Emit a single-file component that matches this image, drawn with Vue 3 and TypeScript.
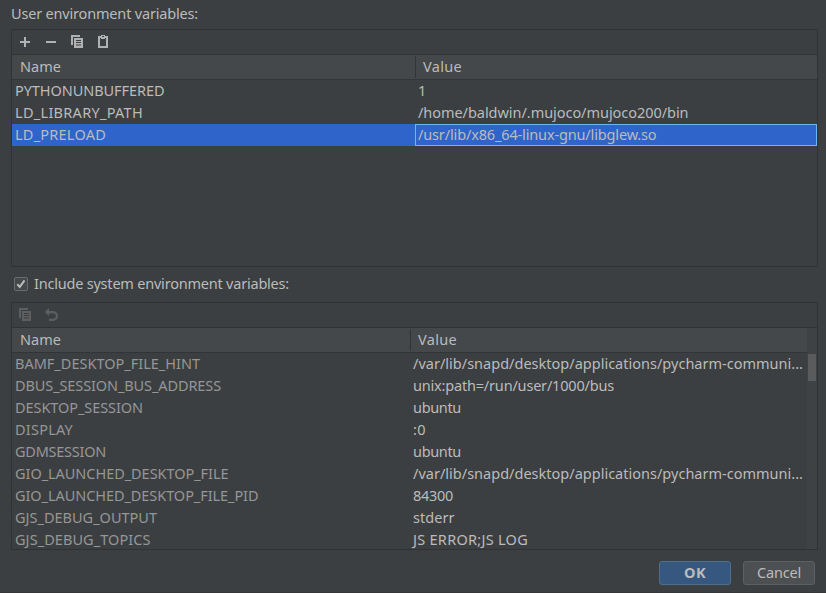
<script setup lang="ts">
import type { Directive } from 'vue'

interface Cell { text: string; width: number }
interface Variable { name: Cell; value: Cell }

const v = (name: string, nameWidth: number, value: string, valueWidth: number): Variable => ({
  name: { text: name, width: nameWidth },
  value: { text: value, width: valueWidth },
})

const userVariables: Variable[] = [
  v('PYTHONUNBUFFERED', 149.5, '1', 8),
  v('LD_LIBRARY_PATH', 128, '/home/baldwin/.mujoco/mujoco200/bin', 270.5),
  v('LD_PRELOAD', 91, '/usr/lib/x86_64-linux-gnu/libglew.so', 238.5),
]
const selected = 2

const desktopFile = '/var/lib/snapd/desktop/applications/pycharm-communi...'
const systemVariables: Variable[] = [
  v('BAMF_DESKTOP_FILE_HINT', 185, desktopFile, 390),
  v('DBUS_SESSION_BUS_ADDRESS', 206, 'unix:path=/run/user/1000/bus', 201),
  v('DESKTOP_SESSION', 128, 'ubuntu', 48),
  v('DISPLAY', 58, ':0', 13),
  v('GDMSESSION', 91, 'ubuntu', 48),
  v('GIO_LAUNCHED_DESKTOP_FILE', 213.5, desktopFile, 390),
  v('GIO_LAUNCHED_DESKTOP_FILE_PID', 243.5, '84300', 40),
  v('GJS_DEBUG_OUTPUT', 142, 'stderr', 41.5),
  v('GJS_DEBUG_TOPICS', 135.5, 'JS ERROR;JS LOG', 115),
]

// Tracks a label so that it spans the given number of pixels.
const vFit: Directive<HTMLElement, number> = {
  mounted(el, { value }) {
    const count = (el.textContent ?? '').length
    const natural = el.getBoundingClientRect().width
    if (count > 1) el.style.letterSpacing = `${(value - natural) / count}px`
  },
}
</script>

<template>
  <main class="dialog">
    <div class="caption"><span v-fit="187">User environment variables:</span></div>

    <section class="panel user">
      <div class="toolbar">
        <svg class="icon" viewBox="0 0 16 16"><path d="M7 3h2v4h4v2H9v4H7V9H3V7h4z" /></svg>
        <svg class="icon" viewBox="0 0 16 16"><path d="M3 7h10v2H3z" /></svg>
        <svg class="icon" viewBox="0 0 16 16">
          <path d="M2 1h9v2H4v8H2z" />
          <path fill-rule="evenodd" d="M5 4h9v10H5zM7 6v1h5V6zM7 8v1h5V8zM7 10.500v1h5v-1z" />
        </svg>
        <svg class="icon" viewBox="0 0 16 16">
          <path fill-rule="evenodd" d="M3 2h3V1h4v1h3v12H3zM5 4v8h6V4h-1v1H6V4zM7 2v1h2V2z" />
        </svg>
      </div>
      <div class="header">
        <div class="head name"><span v-fit="41">Name</span></div>
        <div class="head value"><span v-fit="39">Value</span></div>
      </div>
      <div class="rows">
        <div v-for="(item, i) in userVariables" :key="item.name.text" class="row" :class="{ selected: i === selected }">
          <div class="cell name"><span v-fit="item.name.width">{{ item.name.text }}</span></div>
          <div class="cell value"><span v-fit="item.value.width">{{ item.value.text }}</span></div>
        </div>
      </div>
    </section>

    <label class="include">
      <svg class="check" viewBox="0 0 14 14">
        <rect x=".5" y=".5" width="13" height="13" rx="1.500" />
        <path d="M3.300 7.200l2.500 2.700 4.700-6.600" />
      </svg>
      <span v-fit="255">Include system environment variables:</span>
    </label>

    <section class="panel system">
      <div class="toolbar disabled">
        <svg class="icon" viewBox="0 0 16 16">
          <path d="M2 1h9v2H4v8H2z" />
          <path fill-rule="evenodd" d="M5 4h9v10H5zM7 6v1h5V6zM7 8v1h5V8zM7 10.500v1h5v-1z" />
        </svg>
        <svg class="icon" viewBox="0 0 16 16">
          <path d="M2 5l4-4v3h4a5 5 0 0 1 0 10H6v-2.200h4a2.800 2.800 0 0 0 0-5.600H6V9z" />
        </svg>
      </div>
      <div class="body">
        <div class="table">
          <div class="header">
            <div class="head name"><span v-fit="41">Name</span></div>
            <div class="head value"><span v-fit="39">Value</span></div>
          </div>
          <div class="rows">
            <div v-for="item in systemVariables" :key="item.name.text" class="row">
              <div class="cell name"><span v-fit="item.name.width">{{ item.name.text }}</span></div>
              <div class="cell value"><span v-fit="item.value.width">{{ item.value.text }}</span></div>
            </div>
          </div>
        </div>
        <div class="scrollbar"><div class="thumb"></div></div>
      </div>
    </section>

    <footer class="actions">
      <button class="button primary"><span v-fit="22">OK</span></button>
      <button class="button"><span v-fit="44">Cancel</span></button>
    </footer>
  </main>
</template>

<style>
body { background: #3c3f41; }
</style>

<style scoped>
.dialog {
  box-sizing: border-box;
  width: 826px;
  height: 593px;
  padding: 0 8px 0 11px;
  overflow: hidden;
  border-bottom: 1px solid #343638;
  background: #3c3f41;
  color: #bbb;
  font: 14.5px/20px "Noto Sans", sans-serif;
  white-space: nowrap;
}
.dialog span { display: inline-block; }
.caption { height: 26px; padding-top: 3px; }
.panel {
  box-sizing: border-box;
  display: flex;
  flex-direction: column;
  border: 1px solid #323232;
  overflow: hidden;
}
.user { height: 238px; }
.system { height: 248px; }
.toolbar {
  display: flex;
  align-items: center;
  flex: none;
  gap: 10px;
  height: 24px;
  padding-left: 5px;
  border-bottom: 1px solid #323232;
}
.icon { width: 16px; height: 16px; fill: #afb1b3; }
.disabled .icon { fill: #5c5e60; }
.header {
  display: flex;
  align-items: center;
  height: 24px;
  background: #45484a;
  border-bottom: 1px solid #323537;
}
.name { flex: none; box-sizing: border-box; width: 403px; }
.value { flex: 1; box-sizing: border-box; }
.system .name { width: 398px; }
.head { height: 22px; padding-left: 8px; }
.head.value { padding-left: 7px; border-left: 1px solid #323537; }
.row { display: flex; height: 22px; }
.cell { height: 22px; padding-left: 3px; }
.system .cell.name { color: #969696; }
.selected { background: #2f65ca; }
.selected .value {
  padding-left: 2px;
  border: 1px solid #6eb5f5;
  line-height: 18px;
}
.include {
  display: flex;
  align-items: center;
  gap: 6px;
  height: 35px;
  padding-left: 3px;
}
.include span { padding-bottom: 4px; }
.check { width: 14px; height: 14px; margin-bottom: 1px; }
.check rect { fill: #43494a; stroke: #6b6b6b; }
.check path { fill: none; stroke: #bbb; stroke-width: 2; }
.body { display: flex; flex: 1; min-height: 0; }
.table { flex: 1; min-width: 0; overflow: hidden; }
.scrollbar {
  box-sizing: border-box;
  width: 10px;
  padding: 26px 1px 0;
  background: #3f4244;
}
.thumb { height: 27px; background: #595b5d; }
.actions { display: flex; gap: 12px; padding: 11px 3px 0 0; justify-content: flex-end; }
.button {
  box-sizing: border-box;
  width: 72px;
  height: 24px;
  padding: 0 0 2px;
  border: 1px solid #5e6060;
  border-radius: 3px;
  background: #4c5052;
  color: #bbb;
  font: inherit;
}
.primary { border-color: #4c708c; background: #365880; font-weight: 700; }
</style>
